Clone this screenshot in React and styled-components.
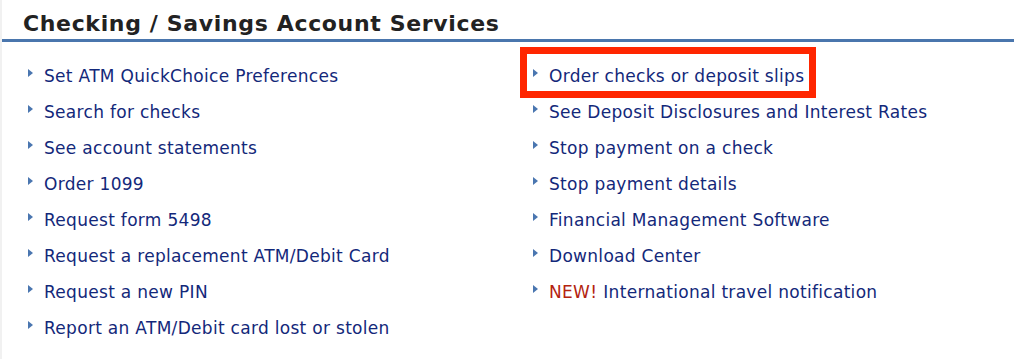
import React from "react"
import styled, { createGlobalStyle } from "styled-components"

const GlobalStyle = createGlobalStyle`
  body {
    margin: 0;
    background: #fff;
    font-family: "DejaVu Sans", Verdana, sans-serif;
  }
`

const Panel = styled.div`
  width: 1012px;
  height: 359px;
  border-left: 2px solid #f1f1f1;
`

const Heading = styled.h2`
  margin: 0;
  height: 42px;
  padding-left: 21px;
  box-sizing: border-box;
  display: flex;
  align-items: flex-end;
  padding-bottom: 3px;
  font-size: 22px;
  letter-spacing: 0.65px;
  font-weight: bold;
  color: #222;
  border-bottom: 3px solid #4a76ad;
`

const Columns = styled.div`
  display: grid;
  grid-template-columns: 505px 505px;
  padding-top: 16px;
`

const List = styled.ul`
  list-style: none;
  margin: 0;
  padding: 0;
`

const Item = styled.li`
  position: relative;
  height: 36px;
  display: flex;
  align-items: center;
  padding-left: 26px;
  font-size: 17px;
  letter-spacing: 0.3px;
  color: #13287a;

  &::before {
    content: "";
    flex: none;
    width: 0;
    height: 0;
    border-top: 4.5px solid transparent;
    border-bottom: 4.5px solid transparent;
    border-left: 5px solid #4a76b0;
    margin-right: 11px;
    margin-top: -6px;
  }

  ${p => p.$highlight && `
    &::after {
      content: "";
      position: absolute;
      left: 13px;
      top: -11px;
      width: 296px;
      height: 51px;
      box-sizing: border-box;
      border: 7px solid #ff2600;
    }
  `}
`

const New = styled.span`
  color: #b3230f;
  margin-right: 6px;
`

const left = [
  "Set ATM QuickChoice Preferences",
  "Search for checks",
  "See account statements",
  "Order 1099",
  "Request form 5498",
  "Request a replacement ATM/Debit Card",
  "Request a new PIN",
  "Report an ATM/Debit card lost or stolen",
]

const right = [
  "Order checks or deposit slips",
  "See Deposit Disclosures and Interest Rates",
  "Stop payment on a check",
  "Stop payment details",
  "Financial Management Software",
  "Download Center",
]

export default function App() {
  return (
    <>
      <GlobalStyle />
      <Panel>
        <Heading>Checking / Savings Account Services</Heading>
        <Columns>
          <List>
            {left.map(t => (
              <Item key={t}>{t}</Item>
            ))}
          </List>
          <List>
            {right.map((t, i) => (
              <Item key={t} $highlight={i === 0}>{t}</Item>
            ))}
            <Item>
              <New>NEW!</New>International travel notification
            </Item>
          </List>
        </Columns>
      </Panel>
    </>
  )
}
